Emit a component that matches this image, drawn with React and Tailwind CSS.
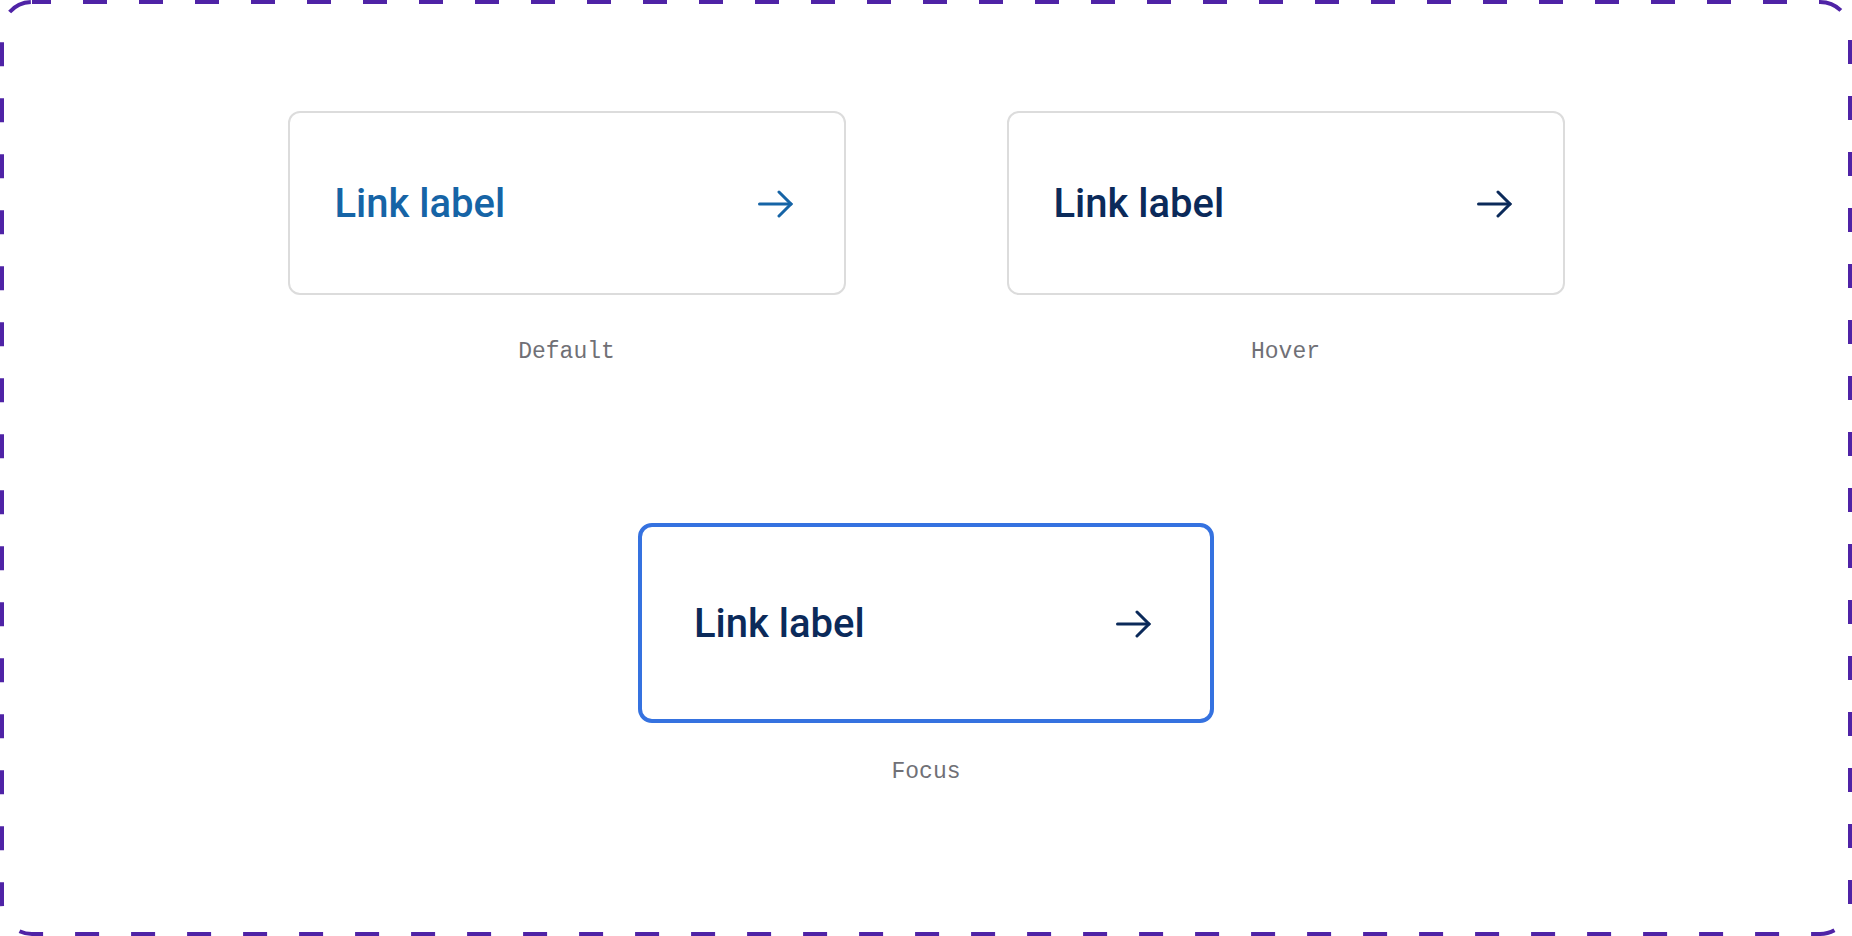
const Arrow = ({ className }) => (
  <svg
    width="36"
    height="28"
    viewBox="0 0 36 28"
    fill="none"
    stroke="currentColor"
    strokeWidth="3"
    strokeLinecap="round"
    strokeLinejoin="miter"
    className={className}
  >
    <path d="M1.5 14H33" />
    <path d="M21 2L33 14L21 26" />
  </svg>
)

const LinkCard = ({ state }) => {
  if (state === 'focus') {
    return (
      <div className="w-[576px] h-[200px] rounded-[14px] border-4 border-[#3572e0] bg-white pt-[2px] pl-[52px] pr-[58px] flex items-center justify-between text-[#0b2a5a]">
        <span className="text-[40px] font-medium leading-none">Link label</span>
        <Arrow />
      </div>
    )
  }

  const color = state === 'hover' ? 'text-[#0b2a5a]' : 'text-[#1664a6]'
  return (
    <div className={`w-[558px] h-[184px] rounded-[12px] border-2 border-[#dcdcdc] bg-white pt-[2px] pl-[45px] pr-[50px] flex items-center justify-between ${color}`}>
      <span className="text-[40px] font-medium leading-none">Link label</span>
      <Arrow />
    </div>
  )
}

const StateLabel = ({ children, className }) => (
  <p className={`text-[23px] leading-[28px] text-[#707076] ${className}`} style={{ fontFamily: '"Liberation Mono", "DejaVu Sans Mono", monospace' }}>
    {children}
  </p>
)

export default function App() {
  return (
    <div className="relative w-full h-[936px] bg-white overflow-hidden" style={{ fontFamily: 'Roboto, "Noto Sans", sans-serif' }}>
      <svg className="absolute inset-0 pointer-events-none" width="1852" height="936">
        <rect
          x="2"
          y="2"
          width="1848"
          height="932"
          rx="30"
          fill="none"
          stroke="#4f23a6"
          strokeWidth="4"
          strokeDasharray="24 32"
          strokeDashoffset="5"
        />
      </svg>

      <div className="flex flex-col items-center pt-[111px]">
        <div className="flex gap-[161px]">
          <div className="flex flex-col items-center">
            <LinkCard state="default" />
            <StateLabel className="mt-[43px]">Default</StateLabel>
          </div>
          <div className="flex flex-col items-center">
            <LinkCard state="hover" />
            <StateLabel className="mt-[43px]">Hover</StateLabel>
          </div>
        </div>

        <div className="flex flex-col items-center mt-[157px]">
          <LinkCard state="focus" />
          <StateLabel className="mt-[35px]">Focus</StateLabel>
        </div>
      </div>
    </div>
  )
}
